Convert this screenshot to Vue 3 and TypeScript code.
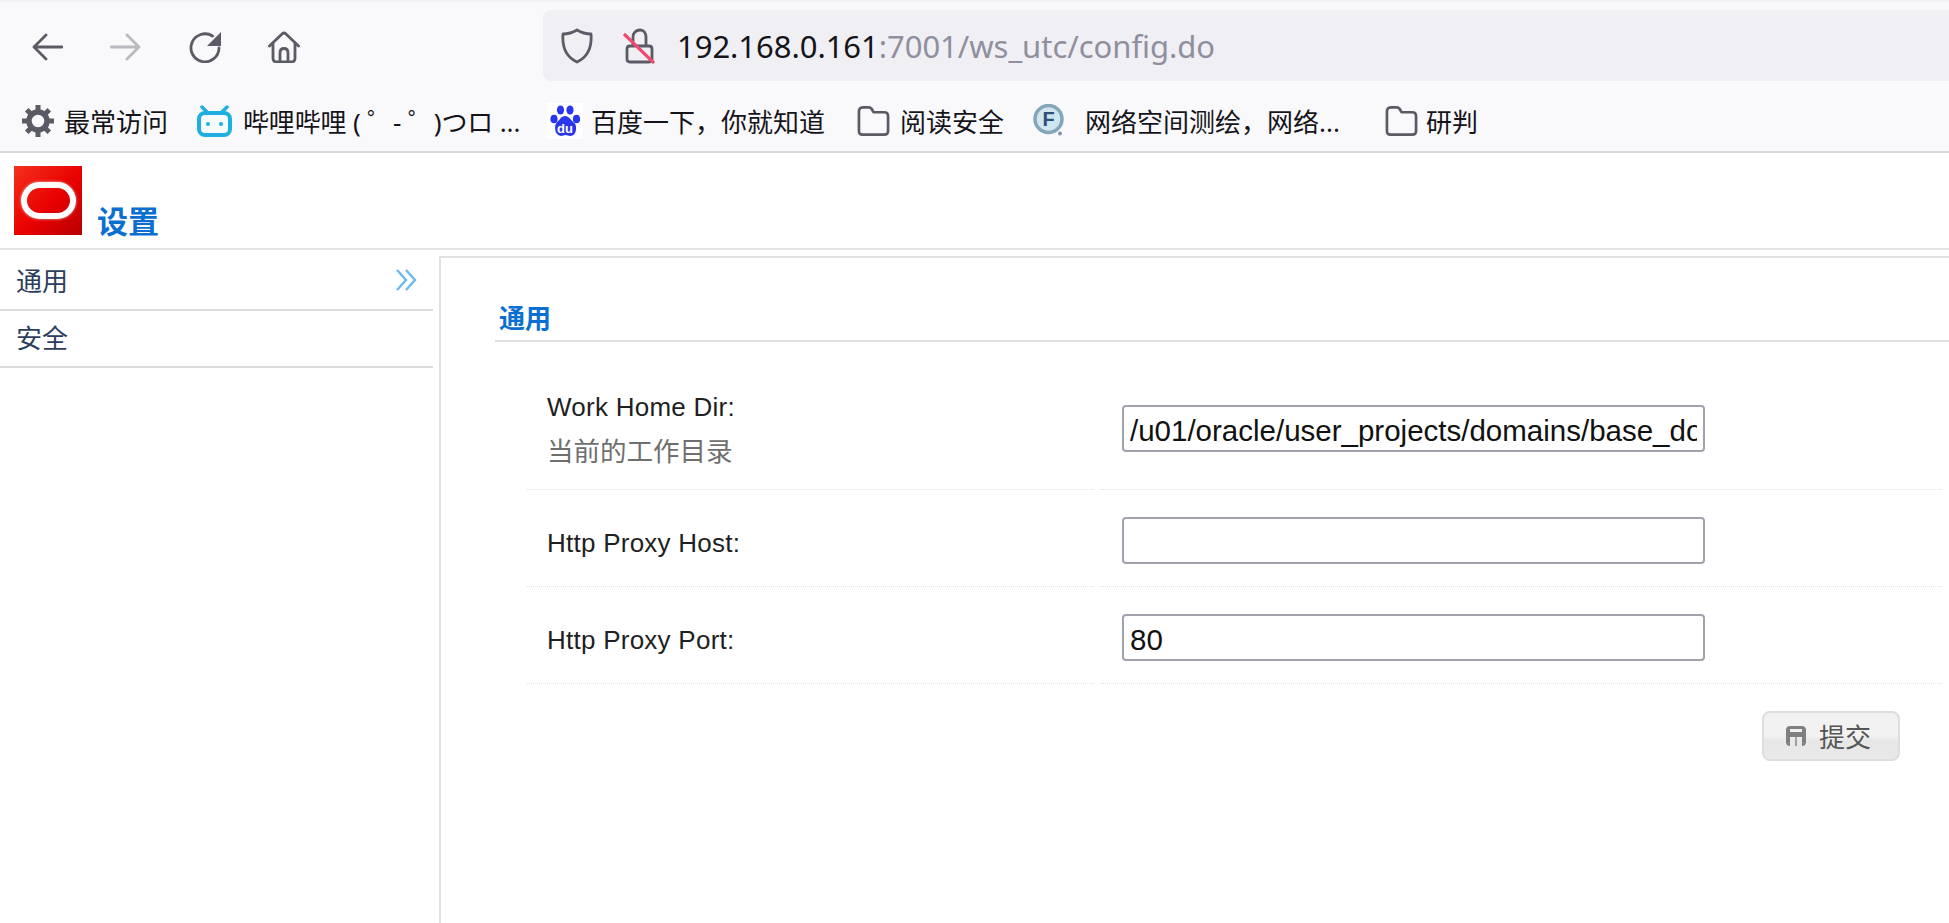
<script setup lang="ts">
interface Field { label: string; hint?: string; value: string }
const fields: Field[] = [
  { label: 'Work Home Dir:', hint: '当前的工作目录', value: '/u01/oracle/user_projects/domains/base_domain/' },
  { label: 'Http Proxy Host:', value: '' },
  { label: 'Http Proxy Port:', value: '80' }
]
const gearSpokes = [0, 45, 90, 135, 180, 225, 270, 315]
</script>

<template>
  <div class="page">
    <div class="chrome">
      <div class="toolbar">
        <div class="nav">
          <svg class="nav-icon" viewBox="0 0 32 32"><path d="M31 16H3M15 4 3 16l12 12" /></svg>
          <svg class="nav-icon faded" viewBox="0 0 32 32"><path d="M1 16h28M17 4l12 12-12 12" /></svg>
          <svg class="nav-icon" viewBox="0 0 32 32"><path d="M23.500 5A14 14 0 1 0 30 17" /><path class="solid" d="M32 1v14H18z" /></svg>
          <svg class="nav-icon" viewBox="0 0 32 32"><path d="M1.500 15 14 3c1.300-1.200 2.700-1.200 4 0l12.500 12" /><path d="M5 12v15c0 2.500 1.500 4 4 4h14c2.500 0 4-1.500 4-4V12" /><path d="M12 31v-9c0-3 1.500-4.500 4-4.500s4 1.500 4 4.500v9" /></svg>
        </div>
        <div class="urlbar">
          <svg class="shield" viewBox="0 0 32 36"><path d="M16 2c5 3 9 4 14 4 1 13-3 23-14 28C5 29 1 19 2 6c5 0 9-1 14-4Z" /></svg>
          <svg class="lock" viewBox="0 0 32 36"><path d="M10 18V9c0-4 3-7 7-7s6 3 6 7v9M7 18h19c2 0 3 1 3 3v10c0 2-1 3-3 3H7c-2 0-3-1-3-3V21c0-2 1-3 3-3Z" /><path class="slash" d="M1 6l30 29" /></svg>
          <span class="url"><span class="host">192.168.0.161</span>:7001/ws_utc/config.do</span>
        </div>
      </div>
      <div class="bookmarks">
        <span class="bm bm-gear">
          <svg class="bm-icon" viewBox="0 0 32 32">
            <circle class="gear-ring" cx="16" cy="16" r="9" />
            <rect v-for="a in gearSpokes" :key="a" class="gear-tooth" x="13.500" y="0" width="5" height="8" :transform="`rotate(${a} 16 16)`" />
          </svg>
          最常访问
        </span>
        <span class="bm bm-bili">
          <svg class="bm-icon wide" viewBox="0 0 35 32"><path class="bili-ear" d="M11 8 5 2M24 8l6-6" /><rect class="bili-face" x="2" y="8" width="31" height="22" rx="6" /><circle class="bili-eye" cx="11" cy="19" r="2" /><circle class="bili-eye" cx="24" cy="19" r="2" /></svg>
          <span class="bili-label">哔哩哔哩 ( ゜- ゜)つロ ...</span>
        </span>
        <span class="bm bm-baidu">
          <svg class="bm-icon baidu" viewBox="0 0 36 36"><g class="paw"><ellipse cx="7" cy="16" rx="3.600" ry="4.300" /><ellipse cx="13.500" cy="7" rx="3.600" ry="4.600" /><ellipse cx="23" cy="7" rx="3.600" ry="4.600" /><ellipse cx="29.500" cy="16" rx="3.600" ry="4.300" /><path d="M18 13c-4 0-5 4-8 6-3 3-3 13 4 14 2 0 3-1 4.500-1s3 1 5 1c6 0 7-10 4-13-3-2-5.500-7-9.500-7Z" /></g><text class="du" x="18" y="30">du</text></svg>
          百度一下，你就知道
        </span>
        <span class="bm bm-read">
          <svg class="bm-icon folder" viewBox="0 0 34 32"><path d="M2 6c0-2 1-4 4-4h6c2 0 3 1 4 3s1 2 3 2h9c3 0 4 2 4 4v15c0 3-1 4-4 4H6c-3 0-4-1-4-4Z" /></svg>
          阅读安全
        </span>
        <span class="bm bm-fofa">
          <svg class="bm-icon fofa" viewBox="0 0 33 34"><circle class="fofa-ring" cx="16.500" cy="15" r="13.500" /><text class="fofa-f" x="16.500" y="22">F</text><circle class="fofa-tail" cx="28" cy="29.500" r="2" /></svg>
          网络空间测绘，网络...
        </span>
        <span class="bm bm-judge">
          <svg class="bm-icon folder" viewBox="0 0 34 32"><path d="M2 6c0-2 1-4 4-4h6c2 0 3 1 4 3s1 2 3 2h9c3 0 4 2 4 4v15c0 3-1 4-4 4H6c-3 0-4-1-4-4Z" /></svg>
          研判
        </span>
      </div>
    </div>

    <header class="app-header">
      <div class="logo"><span class="logo-ring"></span></div>
      <h1 class="app-title">设置</h1>
    </header>

    <div class="main">
      <aside class="sidebar">
        <div class="side-item first">
          <span>通用</span>
          <svg class="chev" viewBox="0 0 22 22"><path d="M2 1l9 10-9 10M11 1l9 10-9 10" /></svg>
        </div>
        <div class="side-item"><span>安全</span></div>
      </aside>
      <section class="content">
        <h2 class="section-title">通用</h2>
        <div class="form">
          <div v-for="(f, i) in fields" :key="f.label" class="row" :class="{ 'row-first': i === 0 }">
            <div class="cell label-cell">
              <div class="label">{{ f.label }}</div>
              <div v-if="f.hint" class="hint">{{ f.hint }}</div>
            </div>
            <div class="cell input-cell">
              <input class="field" type="text" :value="f.value" />
            </div>
          </div>
        </div>
        <div class="actions">
          <button class="submit" type="button">
            <svg class="save" viewBox="0 0 20 20"><path fill-rule="evenodd" d="M4 0h12c2.500 0 4 1.500 4 4v12c0 2.500-1.500 4-4 4H4c-2.500 0-4-1.500-4-4V4c0-2.500 1.500-4 4-4Zm0 3v3h12V3ZM4 11v9h12v-9Z" /><rect class="save-bar" x="9.300" y="11" width="1.400" height="9" /></svg>
            提交
          </button>
        </div>
      </section>
    </div>
  </div>
</template>

<style>
html, body { margin: 0; background: #fff; overflow: hidden; }
</style>

<style scoped>
.page {
  width: 1949px;
  height: 923px;
  display: flex;
  flex-direction: column;
  overflow: hidden;
  font-family: "Noto Sans", "Noto Sans CJK SC", sans-serif;
  background: #fff;
}
.chrome {
  height: 153px;
  box-sizing: border-box;
  background: #f9f9fb;
  border-top: 2px solid #f2f2f4;
  border-bottom: 2px solid #d9d9da;
  flex: none;
}
.toolbar { display: flex; align-items: flex-start; padding-top: 8px; height: 90px; box-sizing: border-box; }
.nav { display: flex; align-items: center; width: 543px; height: 71px; box-sizing: border-box; padding: 3px 0 0 31px; gap: 47px; }
.nav-icon { width: 32px; height: 32px; flex: none; fill: none; stroke: #5b5b66; stroke-width: 2.800; stroke-linejoin: round; stroke-linecap: round; }
.nav-icon.faded { opacity: .4; }
.nav-icon .solid { fill: #5b5b66; stroke: none; }
.urlbar { flex: 1; height: 71px; background: #f0f0f4; border-radius: 8px 0 0 8px; display: flex; align-items: center; box-sizing: border-box; padding-left: 18px; }
.shield { width: 32px; height: 36px; fill: none; stroke: #5b5b66; stroke-width: 2.800; stroke-linejoin: round; flex: none; }
.lock { width: 32px; height: 36px; margin-left: 30px; fill: none; stroke: #5b5b66; stroke-width: 2.800; flex: none; }
.lock .slash { stroke: #f0486e; stroke-width: 3.200; }
.url { margin-left: 22px; font-family: "Noto Sans", sans-serif; font-size: 31px; letter-spacing: -0.04px; color: #8f8f9d; white-space: nowrap; }
.host { color: #15141a; }
.bookmarks { height: 59px; box-sizing: border-box; font-size: 26px; color: #15141a; white-space: nowrap; display: flex; align-items: center; padding: 0 0 2px 22px; }
.bm { display: inline-flex; align-items: center; flex: none; }
.bm-icon { width: 32px; height: 32px; margin-right: 10px; flex: none; }
.bm-icon.wide { width: 35px; margin-right: 11px; }
.bm-icon.baidu { width: 36px; height: 36px; margin-right: 8px; background: #fff; }
.bm-icon.fofa { width: 33px; height: 34px; margin-right: 20px; }
.bm-icon.folder { width: 33px; height: 32px; fill: none; stroke: #5b5b66; stroke-width: 2.800; stroke-linejoin: round; }
.gear-ring { fill: none; stroke: #5b5b66; stroke-width: 5.500; }
.gear-tooth { fill: #5b5b66; }
.bili-ear { stroke: #1eaee0; stroke-width: 3.500; stroke-linecap: round; fill: none; }
.bili-face { fill: #f6fbfd; stroke: #1eaee0; stroke-width: 4; }
.bili-eye { fill: #1eaee0; }
.bili-label { letter-spacing: -0.15px; }
.paw { fill: #2a35ee; }
.du { fill: #fff; font: bold 13px "Liberation Sans", sans-serif; text-anchor: middle; }
.fofa-ring { fill: #cfe6f0; stroke: #84a6b9; stroke-width: 3.500; }
.fofa-f { fill: #2f4f78; font: bold 20px "Liberation Sans", sans-serif; text-anchor: middle; }
.fofa-tail { fill: #7d94a8; }
.bm-gear { width: 175px; }
.bm-bili { width: 350px; }
.bm-baidu { width: 310px; }
.bm-read { width: 175px; }
.bm-fofa { width: 353px; }
.bm-judge .bm-icon { margin-right: 8px; }

.app-header { height: 97px; box-sizing: border-box; flex: none; display: flex; align-items: flex-start; border-bottom: 2px solid #e4e4e4; padding: 13px 0 0 14px; }
.logo { width: 68px; height: 69px; background: linear-gradient(135deg, #f5311c 0%, #e80000 55%, #b80000 100%); display: flex; align-items: center; justify-content: center; flex: none; box-sizing: border-box; }
.logo-ring { width: 55px; height: 37px; box-sizing: border-box; border: 6px solid #fff; border-radius: 18.500px; box-shadow: 0 0 3px rgba(255,255,255,.7); }
.app-title { margin: 37px 0 0 15px; font-size: 31px; line-height: 36px; font-weight: 700; color: #0a6fd0; }

.main { flex: 1; display: flex; min-height: 0; }
.sidebar { width: 433px; flex: none; margin-right: 6px; padding-top: 4px; font-size: 26px; color: #2d3e5c; }
.side-item { height: 57px; box-sizing: border-box; border-bottom: 2px solid #dcdcdc; display: flex; align-items: center; justify-content: space-between; padding: 0 16px 3px; }
.chev { width: 22px; height: 22px; fill: none; stroke: #6db9ee; stroke-width: 2.400; }
.content { flex: 1; margin-top: 6px; border-left: 2px solid #e2e2e2; border-top: 2px solid #e2e2e2; min-width: 0; }
.section-title { margin: 45px 0 0 54px; padding: 0 0 6px 4px; font-size: 26px; line-height: 31px; font-weight: 700; color: #0a6fd0; border-bottom: 2px solid #e0e0e0; }
.form { margin: 42px 7px 0 86px; }
.row { display: grid; grid-template-columns: 567px 1fr; column-gap: 6px; height: 97px; }
.row-first { height: 106px; }
.cell { border-bottom: 1px dotted #e2e2e2; box-sizing: border-box; }
.label-cell { padding: 32px 0 0 20px; }
.row-first .label-cell { padding-top: 2px; }
.label { font-size: 26px; letter-spacing: 0.25px; line-height: 43px; color: #1f1f1f; font-family: "Liberation Sans", "Noto Sans CJK SC", sans-serif; }
.hint { font-size: 26.500px; line-height: 45px; color: #6f6f6f; }
.input-cell { padding: 27px 0 0 22px; }
.row-first .input-cell { padding-top: 21px; }
.field { display: block; width: 583px; height: 47px; box-sizing: border-box; border: 2px solid #a2a2ad; border-radius: 4px; padding: 4px 6px 0; font-size: 29.500px; font-family: "Liberation Sans", sans-serif; color: #111; background: #fff; outline: none; }
.actions { display: flex; justify-content: flex-end; padding: 27px 49px 0 0; }
.submit { width: 138px; height: 50px; box-sizing: border-box; border: 2px solid #dedede; border-radius: 8px; background: linear-gradient(#f2f2f2 50%, #e7e7e7 60%, #e9e9e9); display: flex; align-items: center; gap: 13px; font-family: inherit; font-size: 26px; color: #555; padding: 0 0 0 22px; }
.save { width: 20px; height: 20px; fill: #808080; flex: none; }
.save-bar { fill: #808080; }
</style>
